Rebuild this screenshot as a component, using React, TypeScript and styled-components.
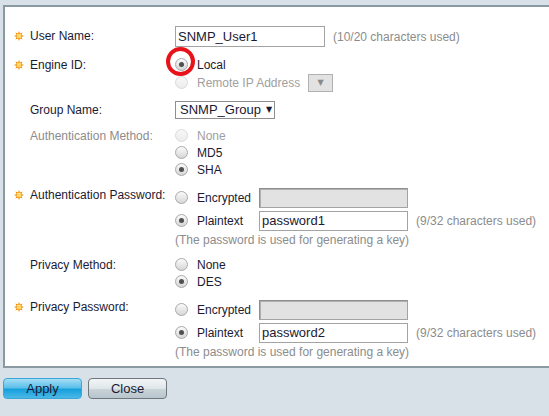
import * as React from 'react';
import styled, { createGlobalStyle } from 'styled-components';

const Global = createGlobalStyle`
  html, body {
    margin: 0;
    padding: 0;
    background: #d9e1e8;
    font-family: "Liberation Sans", Arial, sans-serif;
    font-size: 12px;
    color: #1a1a33;
  }
`;

const Page = styled.div`
  width: 549px;
  height: 416px;
  padding-top: 5px;
  box-sizing: border-box;
  overflow: hidden;
`;

const Panel = styled.div`
  margin-left: 3px;
  background: #fff;
  border-top: 2px solid #8a9aa2;
  border-left: 2px solid #8a9aa2;
  border-bottom: 2px solid #8a9aa2;
  padding: 18px 0 6px 9px;
  display: flex;
  flex-direction: column;
  gap: 8px;
`;

const Row = styled.div`
  display: grid;
  grid-template-columns: 161px 1fr;
  align-items: start;
`;

const Label = styled.div<{ $pad?: number; $muted?: boolean }>`
  display: flex;
  align-items: center;
  height: 17px;
  margin-top: ${(p) => p.$pad ?? 0}px;
  color: ${(p) => (p.$muted ? '#8c8c8c' : '#1a1a33')};
  white-space: nowrap;
`;

const ReqSlot = styled.span`
  width: 10px;
  height: 10px;
  margin-right: 6px;
  display: inline-flex;
`;

const Controls = styled.div`
  display: flex;
  flex-direction: column;
`;

const Line = styled.div<{ $h: number }>`
  display: flex;
  align-items: center;
  height: ${(p) => p.$h}px;
  white-space: nowrap;
`;

const Option = styled.div<{ $w?: number }>`
  position: relative;
  display: flex;
  align-items: center;
  width: ${(p) => (p.$w ? `${p.$w}px` : 'auto')};
`;

const Radio = styled.span<{ $checked?: boolean; $disabled?: boolean }>`
  position: relative;
  width: 11px;
  height: 11px;
  border-radius: 50%;
  border: 1px solid ${(p) => (p.$disabled ? '#dadada' : '#a9a9a9')};
  background: ${(p) =>
    p.$disabled
      ? 'linear-gradient(#f8f8f8, #ececec)'
      : 'linear-gradient(#fafafa, #d6d6d6)'};
  flex-shrink: 0;
  &::after {
    content: '';
    display: ${(p) => (p.$checked ? 'block' : 'none')};
    position: absolute;
    left: 3px;
    top: 3px;
    width: 5px;
    height: 5px;
    border-radius: 50%;
    background: #505050;
  }
`;

const OptText = styled.span<{ $muted?: boolean }>`
  margin-left: 9px;
  color: ${(p) => (p.$muted ? '#a0a0a0' : '#1a1a33')};
`;

const Hint = styled.span`
  color: #8c8c8c;
  margin-left: 8px;
`;

const Note = styled.div`
  color: #8c8c8c;
  height: 16px;
  line-height: 17px;
`;

const TextBox = styled.div<{ $w: number; $h: number; $disabled?: boolean }>`
  box-sizing: border-box;
  width: ${(p) => p.$w}px;
  height: ${(p) => p.$h}px;
  border: 1px solid #a3a3a3;
  border-top-color: ${(p) => (p.$disabled ? '#8e8e8e' : '#a3a3a3')};
  border-left-color: ${(p) => (p.$disabled ? '#8e8e8e' : '#a3a3a3')};
  ${(p) => (p.$disabled ? 'box-shadow: inset 1px 1px 0 #b0b0b0;' : '')}
  background: ${(p) => (p.$disabled ? '#e2e2e2' : '#fff')};
  padding-left: 2px;
  display: flex;
  align-items: center;
  font-size: 13px;
  color: #1a1a33;
`;

const SelectBox = styled.div<{ $w: number; $disabled?: boolean }>`
  box-sizing: border-box;
  width: ${(p) => p.$w}px;
  height: 18px;
  border: 1px solid ${(p) => (p.$disabled ? '#b0b0b0' : '#8e8e8e')};
  background: ${(p) => (p.$disabled ? '#e2e2e2' : '#fff')};
  display: flex;
  align-items: center;
  justify-content: ${(p) => (p.$disabled ? 'center' : 'flex-start')};
  padding-left: ${(p) => (p.$disabled ? 0 : 4)}px;
  margin-left: ${(p) => (p.$disabled ? 8 : 0)}px;
  color: #1a1a33;
  font-size: 13px;
`;

const Caret = styled.span<{ $muted?: boolean }>`
  font-family: "DejaVu Sans", sans-serif;
  font-size: 8px;
  color: ${(p) => (p.$muted ? '#8a8a8a' : '#1a1a33')};
  margin-left: ${(p) => (p.$muted ? 0 : 5)}px;
`;

const Highlight = styled.span`
  position: absolute;
  left: -9px;
  top: -11px;
  width: 21px;
  height: 21px;
  border: 4px solid #e8121a;
  border-radius: 50%;
  pointer-events: none;
`;

const Footer = styled.div`
  display: flex;
  gap: 6px;
  margin: 10px 0 0 3px;
`;

const Button = styled.button<{ $primary?: boolean }>`
  width: 79px;
  height: 21px;
  border-radius: 4px;
  font-family: "Liberation Sans", Arial, sans-serif;
  font-size: 13px;
  color: #1a1a33;
  padding: 0;
  cursor: pointer;
  border: 1px solid ${(p) => (p.$primary ? '#3aa6d8' : '#6d777c')};
  background: ${(p) =>
    p.$primary
      ? 'linear-gradient(#a6def5 0%, #5cc0ea 45%, #16a0dc 55%, #4bb8e6 100%)'
      : 'linear-gradient(#f2f5f7 0%, #dfe6ea 50%, #c9d3d8 55%, #b8c5cc 100%)'};
`;

const ReqIcon: React.FC = () => (
  <svg width="10" height="10" viewBox="0 0 10 10">
    <polygon
      points="5,0 6,2.6 8.5,1.5 7.4,4 10,5 7.4,6 8.5,8.5 6,7.4 5,10 4,7.4 1.5,8.5 2.6,6 0,5 2.6,4 1.5,1.5 4,2.6"
      fill="#f08a00"
    />
    <circle cx="5" cy="5" r="2.4" fill="#ffd86a" />
  </svg>
);

const FieldLabel: React.FC<{ text: string; req?: boolean; pad?: number; muted?: boolean }> = ({
  text,
  req,
  pad,
  muted,
}) => (
  <Label $pad={pad} $muted={muted}>
    <ReqSlot>{req && <ReqIcon />}</ReqSlot>
    {text}
  </Label>
);

const PasswordControls: React.FC<{ value: string }> = ({ value }) => (
  <Controls>
    <Line $h={23}>
      <Option $w={84}>
        <Radio />
        <OptText>Encrypted</OptText>
      </Option>
      <TextBox $w={149} $h={20} $disabled />
    </Line>
    <Line $h={23}>
      <Option $w={84}>
        <Radio $checked />
        <OptText>Plaintext</OptText>
      </Option>
      <TextBox $w={149} $h={20}>
        {value}
      </TextBox>
      <Hint>(9/32 characters used)</Hint>
    </Line>
    <Note>(The password is used for generating a key)</Note>
  </Controls>
);

const App: React.FC = () => {
  return (
    <Page>
      <Global />
      <Panel>
        <Row>
          <FieldLabel text="User Name:" req pad={2} />
          <Controls>
            <Line $h={23}>
              <TextBox $w={150} $h={21}>
                SNMP_User1
              </TextBox>
              <Hint>(10/20 characters used)</Hint>
            </Line>
          </Controls>
        </Row>

        <Row>
          <FieldLabel text="Engine ID:" req />
          <Controls>
            <Line $h={17}>
              <Option>
                <Radio $checked />
                <Highlight />
                <OptText>Local</OptText>
              </Option>
            </Line>
            <Line $h={19}>
              <Option>
                <Radio $disabled />
                <OptText $muted>Remote IP Address</OptText>
              </Option>
              <SelectBox $w={25} $disabled>
                <Caret $muted>▼</Caret>
              </SelectBox>
            </Line>
          </Controls>
        </Row>

        <Row>
          <FieldLabel text="Group Name:" pad={1} />
          <Controls>
            <Line $h={19}>
              <SelectBox $w={100}>
                SNMP_Group
                <Caret>▼</Caret>
              </SelectBox>
            </Line>
          </Controls>
        </Row>

        <Row>
          <FieldLabel text="Authentication Method:" muted />
          <Controls>
            <Line $h={17}>
              <Option>
                <Radio $disabled />
                <OptText $muted>None</OptText>
              </Option>
            </Line>
            <Line $h={17}>
              <Option>
                <Radio />
                <OptText>MD5</OptText>
              </Option>
            </Line>
            <Line $h={17}>
              <Option>
                <Radio $checked />
                <OptText>SHA</OptText>
              </Option>
            </Line>
          </Controls>
        </Row>

        <Row>
          <FieldLabel text="Authentication Password:" req />
          <PasswordControls value="password1" />
        </Row>

        <Row>
          <FieldLabel text="Privacy Method:" />
          <Controls>
            <Line $h={17}>
              <Option>
                <Radio />
                <OptText>None</OptText>
              </Option>
            </Line>
            <Line $h={17}>
              <Option>
                <Radio $checked />
                <OptText>DES</OptText>
              </Option>
            </Line>
          </Controls>
        </Row>

        <Row>
          <FieldLabel text="Privacy Password:" req />
          <PasswordControls value="password2" />
        </Row>
      </Panel>
      <Footer>
        <Button $primary>Apply</Button>
        <Button>Close</Button>
      </Footer>
    </Page>
  );
};

export default App;
